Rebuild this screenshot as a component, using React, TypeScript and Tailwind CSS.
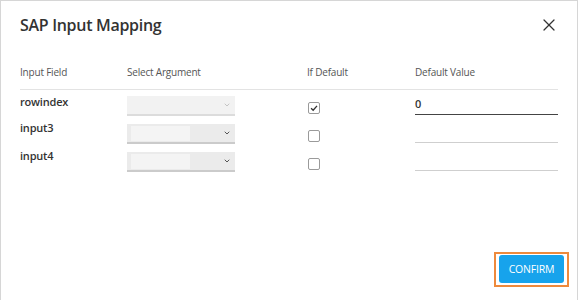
import { X, ChevronDown } from 'lucide-react';

const rows = [
  { name: 'rowindex', disabled: true, checked: true, value: '0', shift: 'mt-0' },
  { name: 'input3', disabled: false, checked: false, value: '', shift: '-mt-[2px]' },
  { name: 'input4', disabled: false, checked: false, value: '', shift: '-mt-[2px]' },
];

const cols = 'grid grid-cols-[107px_180px_108px_143px]';

const App = () => (
  <div
    className="w-[578px] h-[300px] bg-white border-l border-t border-r border-[#d6d6d6] text-[#333] flex flex-col"
    style={{ fontFamily: '"Open Sans", "Noto Sans", sans-serif' }}
  >
    <div className="flex items-center justify-between pl-[19px] pr-[18px] pt-[11px] h-[36px]">
      <h1 className="text-[16px] font-semibold tracking-[-0.3px]">SAP Input Mapping</h1>
      <X className="w-[20px] h-[20px] text-[#333]" strokeWidth={1.5} />
    </div>

    <div className="mx-[19px] mt-[28px]">
      <div className={`${cols} h-[25px] border-b border-[#e3e3e3] text-[10px] tracking-[-0.2px] text-[#555] items-start`}>
        <span>Input Field</span>
        <span>Select Argument</span>
        <span>If Default</span>
        <span>Default Value</span>
      </div>

      <div className="pt-[4px]">
        {rows.map((row) => (
          <div key={row.name} className={`${cols} h-[28px] items-start`}>
            <span className={`${row.shift} text-[11px] font-semibold tracking-[-0.2px] leading-[16px]`}>
              {row.name}
            </span>
            <div
              className={`mt-[2px] w-[108px] h-[20px] border-b-2 flex items-center justify-end pr-[4px] ${
                row.disabled ? 'bg-[#f2f2f2] border-[#dcdcdc]' : 'bg-[#ebebeb] border-[#cbcbcb]'
              }`}
            >
              {!row.disabled && <div className="mr-auto ml-[4px] w-[59px] h-[15px] bg-[#f4f4f4]" />}
              <ChevronDown
                className={`w-[8px] h-[8px] ${row.disabled ? 'text-[#c4c4c4]' : 'text-[#555]'}`}
                strokeWidth={3}
              />
            </div>
            <div className="mt-[8px] ml-[1px] w-[12px] h-[12px] border border-[#9a9a9a] rounded-[2px] bg-white flex items-center justify-center">
              {row.checked && (
                <svg viewBox="0 0 12 12" className="w-[10px] h-[10px]">
                  <path d="M2.5 6.2 L5 8.6 L9.6 3.4" fill="none" stroke="#333" strokeWidth="1.6" />
                </svg>
              )}
            </div>
            <div
              className={`mt-[2px] h-[19px] border-b text-[11px] font-semibold leading-[16px] ${
                row.checked ? 'border-[#444]' : 'border-[#cfcfcf]'
              }`}
            >
              {row.value}
            </div>
          </div>
        ))}
      </div>
    </div>

    <div className="mt-auto mb-[13px] mr-[8px] flex justify-end">
      <div className="border-2 border-[#ee8a3c] px-[3px] pt-[1px] pb-[2px]">
        <button className="w-[65px] h-[28px] rounded-[3px] bg-[#17a3ec] text-white text-[10.5px] tracking-[-0.2px] leading-none">
          CONFIRM
        </button>
      </div>
    </div>
  </div>
);

export default App;
